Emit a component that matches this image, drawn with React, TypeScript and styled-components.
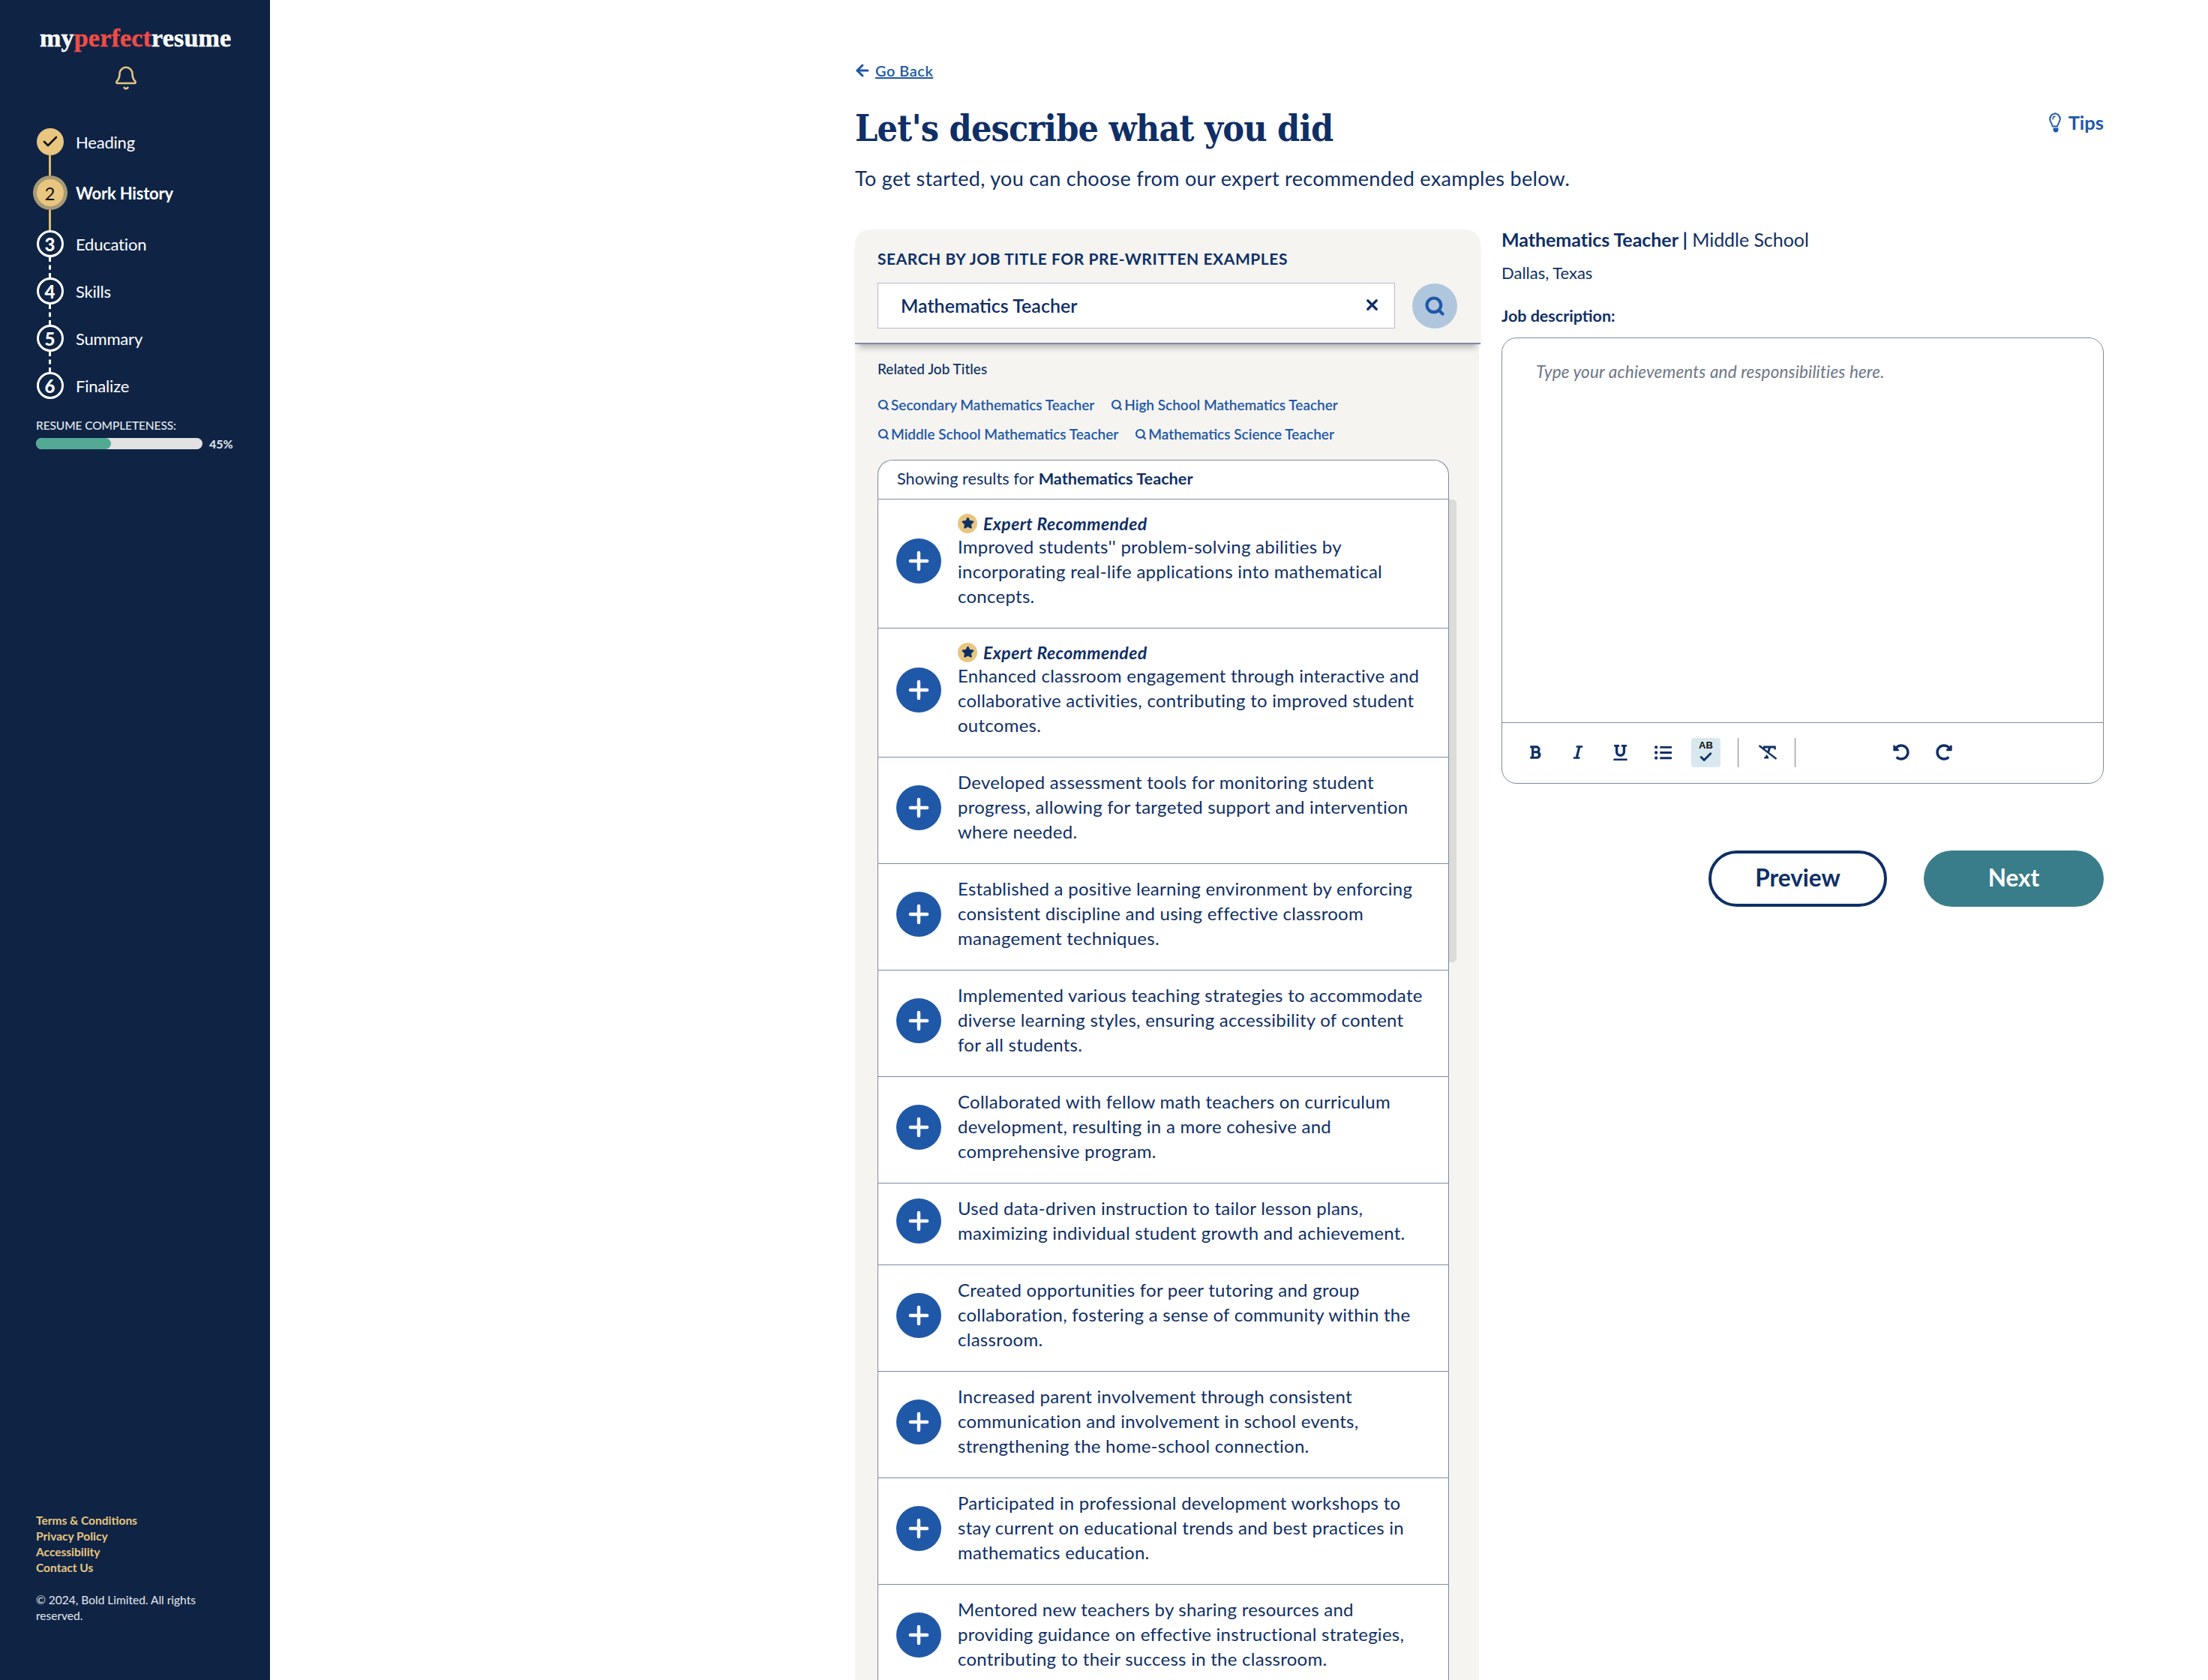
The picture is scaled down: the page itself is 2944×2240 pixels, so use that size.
import React from "react";
import styled, { createGlobalStyle } from "styled-components";
import { ArrowLeft, Bell, Check, Plus, Search, Star, X } from "lucide-react";
import { FaBold, FaItalic, FaListUl, FaRedoAlt, FaRemoveFormat, FaUnderline, FaUndoAlt } from "react-icons/fa";

const navy = "#0f2f66";
const side = "#0f2445";
const gold = "#e8c680";
const blue = "#2058a8";
const line = "#7c8aa3";
const sans = '"Lato", "Noto Sans", sans-serif';

const GlobalStyle = createGlobalStyle`
  html, body {
    margin: 0;
    padding: 0;
    height: 2240px;
    overflow: hidden;
    background: #fff;
    font-family: ${sans};
    color: ${navy};
  }
`;

const Page = styled.div`
  display: flex;
  width: 2944px;
  height: 2240px;
  overflow: hidden;
`;

const Sidebar = styled.aside`
  width: 360px;
  height: 2240px;
  flex: none;
  box-sizing: border-box;
  padding: 33px 0 0 44px;
  background: ${side};
  color: #fff;
  display: flex;
  flex-direction: column;
`;

const Logo = styled.div`
  margin-left: 9px;
  font: 700 34px/36px "Liberation Serif", serif;
  letter-spacing: 0.2px;
  -webkit-text-stroke: 0.5px currentColor;
  color: #fff;
  span {
    color: #ef4c45;
  }
`;

const BellWrap = styled.div`
  margin: 18px 0 0 107px;
  height: 36px;
  color: ${gold};
`;

const Steps = styled.div`
  margin-top: 48px;
  display: flex;
  flex-direction: column;
`;

const StepRow = styled.div`
  display: flex;
  align-items: center;
  gap: 12px;
`;

const StepSlot = styled.div`
  width: 45px;
  display: flex;
  justify-content: center;
`;

const StepDot = styled.div<{ $state: "done" | "current" | "todo" }>`
  width: 36px;
  height: 36px;
  box-sizing: border-box;
  border-radius: 50%;
  display: flex;
  align-items: center;
  justify-content: center;
  font-size: 24px;
  font-weight: ${(p) => (p.$state === "todo" ? 900 : 400)};
  color: ${(p) => (p.$state === "todo" ? "#fff" : "#111")};
  background: ${(p) => (p.$state === "todo" ? "transparent" : gold)};
  border: ${(p) => (p.$state === "todo" ? "3px solid #fff" : "none")};
  box-shadow: ${(p) => (p.$state === "current" ? "0 0 0 5px #a89a74" : "none")};
  margin: ${(p) => (p.$state === "current" ? "5px 0" : "0")};
`;

const StepLabel = styled.div<{ $bold?: boolean }>`
  font-size: 22px;
  font-weight: ${(p) => (p.$bold ? 700 : 400)};
  letter-spacing: -0.2px;
  color: #fff;
`;

const Connector = styled.div<{ $solid?: boolean }>`
  width: 3px;
  height: 27px;
  margin-left: 21px;
  background: ${(p) => (p.$solid ? "#d9b970" : "transparent")};
  border-left: ${(p) => (p.$solid ? "none" : "3px dashed #fff")};
  box-sizing: border-box;
`;

const CompleteLabel = styled.div`
  margin: 25px 0 0 4px;
  font-size: 15.5px;
  line-height: 20px;
  font-weight: 500;
  color: #e6e8ee;
  letter-spacing: -0.1px;
`;

const CompleteRow = styled.div`
  margin: 5px 0 0 4px;
  display: flex;
  align-items: center;
  gap: 9px;
  font-size: 16px;
  font-weight: 700;
  color: #e6e8ee;
`;

const Track = styled.div`
  width: 222px;
  height: 15px;
  border-radius: 8px;
  background: #e2e2e2;
  overflow: hidden;
`;

const Fill = styled.div`
  height: 100%;
  border-radius: 8px;
  background: #53a994;
`;

const SideFooter = styled.div`
  margin: auto 0 75px 4px;
  font-size: 15.5px;
  line-height: 21px;
  width: 240px;
`;

const FooterLink = styled.div`
  color: ${gold};
  font-weight: 700;
`;

const Copyright = styled.div`
  margin-top: 22px;
  color: #e6e8ee;
`;

const Main = styled.main`
  flex: 1;
  box-sizing: border-box;
  padding: 82px 139px 0 780px;
  min-width: 0;
`;

const GoBack = styled.a`
  display: flex;
  align-items: center;
  gap: 5px;
  height: 24px;
  margin-left: -2px;
  font-size: 20px;
  font-weight: 600;
  color: ${blue};
  span {
    text-decoration: underline;
    letter-spacing: 0.5px;
  }
`;

const TitleRow = styled.div`
  margin-top: 30px;
  display: flex;
  align-items: center;
  justify-content: space-between;
`;

const Title = styled.h1`
  margin: 0;
  font: 700 48px/70px "DejaVu Serif Condensed", "DejaVu Serif", serif;
  letter-spacing: -0.8px;
  color: ${navy};
`;

const Tips = styled.div`
  display: flex;
  align-items: center;
  gap: 8px;
  margin-top: -16px;
  font-size: 25.5px;
  font-weight: 700;
  color: ${blue};
`;

const Subtitle = styled.p`
  margin: 14px 0 0;
  font-size: 27px;
  line-height: 36px;
  letter-spacing: 0.3px;
  color: ${navy};
`;

const Columns = styled.div`
  margin-top: 50px;
  display: grid;
  grid-template-columns: 834px 803px;
  column-gap: 28px;
  align-items: start;
`;

const Panel = styled.section`
  background: #f5f4f1;
  border-radius: 20px 20px 0 0;
  height: 1934px;
  width: 832px;
`;

const SearchHead = styled.div`
  box-sizing: border-box;
  height: 153px;
  width: 834px;
  padding: 27px 30px 0;
  border-bottom: 2px solid ${line};
  box-shadow: 0 9px 9px -5px rgba(0, 0, 0, 0.28);
  border-radius: 20px 20px 0 0;
  background: #f5f4f1;
`;

const SearchLabel = styled.div`
  font-size: 21px;
  line-height: 24px;
  font-weight: 700;
  letter-spacing: 0.55px;
  color: ${navy};
  text-transform: uppercase;
`;

const SearchRow = styled.div`
  margin-top: 20px;
  display: flex;
  align-items: center;
  gap: 23px;
`;

const SearchBox = styled.div`
  flex: none;
  width: 690px;
  height: 61px;
  box-sizing: border-box;
  padding: 0 18px 2px 30px;
  display: flex;
  align-items: center;
  justify-content: space-between;
  background: #fff;
  border: 1.5px solid #b6bccd;
  font-size: 25px;
  font-weight: 600;
  color: ${navy};
`;

const SearchButton = styled.div`
  width: 60px;
  height: 60px;
  border-radius: 50%;
  background: #b0c6dc;
  color: ${blue};
  display: flex;
  align-items: center;
  justify-content: center;
`;

const Related = styled.div`
  padding: 21px 0 0 30px;
`;

const RelatedLabel = styled.div`
  font-size: 19px;
  line-height: 24px;
  font-weight: 500;
  color: ${navy};
`;

const LinkRow = styled.div`
  margin-top: 24px;
  height: 24px;
  display: flex;
  gap: 22px;
  & + & {
    margin-top: 15px;
  }
`;

const RelatedLink = styled.a`
  display: flex;
  align-items: center;
  gap: 2px;
  font-size: 19px;
  line-height: 24px;
  font-weight: 600;
  color: ${blue};
  white-space: nowrap;
`;

const ResultsWrap = styled.div`
  display: flex;
  margin: 22px 0 0 30px;
`;

const Card = styled.div`
  width: 762px;
  box-sizing: border-box;
  flex: none;
  background: #fff;
  border: 1.5px solid ${line};
  border-bottom: none;
  border-radius: 20px 20px 0 0;
`;

const CardHead = styled.div`
  height: 52px;
  box-sizing: border-box;
  padding: 0 0 3px 25px;
  display: flex;
  align-items: center;
  gap: 6px;
  font-size: 21.7px;
  border-bottom: 1.5px solid ${line};
  b {
    font-weight: 700;
  }
`;

const Scrollbar = styled.div`
  width: 10px;
  height: 617px;
  margin-top: 53px;
  background: #dcdbd8;
  border-radius: 0 5px 5px 0;
`;

const Item = styled.div`
  box-sizing: border-box;
  padding: 16px 0 26px 24px;
  display: flex;
  align-items: center;
  gap: 23px;
  border-bottom: 1.5px solid ${line};
`;

const AddButton = styled.div`
  width: 60px;
  height: 60px;
  flex: none;
  margin-top: 2px;
  border-radius: 50%;
  background: ${blue};
  color: #fff;
  display: flex;
  align-items: center;
  justify-content: center;
`;

const ItemBody = styled.div`
  margin-left: -1px;
`;

const Expert = styled.div`
  height: 29px;
  margin-top: 1px;
  display: flex;
  align-items: center;
  gap: 8px;
  font-size: 23px;
  font-weight: 700;
  font-style: italic;
  letter-spacing: 0.4px;
  color: ${navy};
`;

const ExpertBadge = styled.div`
  width: 26px;
  height: 26px;
  border-radius: 50%;
  background: ${gold};
  color: ${navy};
  display: flex;
  align-items: center;
  justify-content: center;
`;

const ItemLine = styled.div`
  font-size: 24px;
  line-height: 33px;
  letter-spacing: 0.26px;
  white-space: nowrap;
  color: ${navy};
`;

const Side = styled.section`
  display: flex;
  flex-direction: column;
`;

const JobTitle = styled.div`
  margin-top: -2px;
  font-size: 25px;
  line-height: 30px;
  letter-spacing: -0.05px;
  color: ${navy};
  b {
    font-weight: 700;
  }
`;

const JobPlace = styled.div`
  margin-top: 15px;
  font-size: 22px;
  line-height: 30px;
`;

const JobLabel = styled.div`
  margin-top: 27px;
  font-size: 21.5px;
  line-height: 30px;
  font-weight: 700;
`;

const Editor = styled.div`
  margin-top: 14px;
  height: 595px;
  box-sizing: border-box;
  border: 1.5px solid ${line};
  border-radius: 20px;
  display: flex;
  flex-direction: column;
`;

const EditorBody = styled.div`
  flex: 1;
  padding: 30px 45px 0;
  font-size: 22.5px;
  line-height: 30px;
  letter-spacing: 0.15px;
  font-style: italic;
  color: #6d7686;
`;

const Toolbar = styled.div`
  height: 81px;
  box-sizing: border-box;
  padding: 0 0 2px 15px;
  display: flex;
  align-items: center;
  border-top: 1.5px solid ${line};
`;

const ToolSlot = styled.div<{ $gap?: number }>`
  width: 57px;
  height: 39px;
  flex: none;
  margin-left: ${(p) => p.$gap || 0}px;
  display: flex;
  align-items: center;
  justify-content: center;
  color: ${navy};
`;

const SpellBox = styled.div`
  width: 39px;
  height: 39px;
  border-radius: 4px;
  background: #d8e8ee;
  display: flex;
  flex-direction: column;
  align-items: center;
  justify-content: center;
  font-family: "Liberation Sans", sans-serif;
  font-size: 13px;
  line-height: 13px;
  font-weight: 700;
  color: #111;
  svg {
    color: ${navy};
  }
`;

const ToolDivider = styled.div<{ $gap: number }>`
  width: 1px;
  height: 39px;
  flex: none;
  margin-left: ${(p) => p.$gap}px;
  background: #7c8290;
`;

const Actions = styled.div`
  margin-top: 89px;
  display: flex;
  justify-content: flex-end;
  gap: 49px;
`;

const PillButton = styled.button<{ $primary?: boolean }>`
  width: ${(p) => (p.$primary ? 240 : 238)}px;
  height: 75px;
  box-sizing: border-box;
  padding: 0 0 3px;
  border-radius: 38px;
  font-family: ${sans};
  font-size: 31.5px;
  font-weight: 700;
  background: ${(p) => (p.$primary ? "#3a7d8a" : "#fff")};
  color: ${(p) => (p.$primary ? "#fff" : navy)};
  border: ${(p) => (p.$primary ? "none" : `4px solid ${navy}`)};
`;

const BulbIcon = () => (
  <svg width="18" height="27" viewBox="0 0 18 27" fill="none" stroke="currentColor">
    <path d="M9 1.2C4.4 1.2 1.2 4.8 1.2 8.8c0 3.700 2.600 5.600 3.700 9.700h6.200c1.100-4.100 3.700-6 3.700-9.700 0-4-3.200-7.600-7.800-7.600Z" strokeWidth="2" />
    <path d="M5 9c0-2 1-3.500 3-4" strokeWidth="1.4" strokeLinecap="round" />
    <path d="M5.500 20.500h7v2.200c0 2.200-1.500 3.800-3.500 3.800s-3.500-1.600-3.500-3.800Z" fill="currentColor" stroke="none" />
  </svg>
);

const steps = ["Heading", "Work History", "Education", "Skills", "Summary", "Finalize"];

const related = [
  ["Secondary Mathematics Teacher", "High School Mathematics Teacher"],
  ["Middle School Mathematics Teacher", "Mathematics Science Teacher"],
];

const results = [
  { expert: true, lines: ["Improved students'' problem-solving abilities by", "incorporating real-life applications into mathematical", "concepts."] },
  { expert: true, lines: ["Enhanced classroom engagement through interactive and", "collaborative activities, contributing to improved student", "outcomes."] },
  { lines: ["Developed assessment tools for monitoring student", "progress, allowing for targeted support and intervention", "where needed."] },
  { lines: ["Established a positive learning environment by enforcing", "consistent discipline and using effective classroom", "management techniques."] },
  { lines: ["Implemented various teaching strategies to accommodate", "diverse learning styles, ensuring accessibility of content", "for all students."] },
  { lines: ["Collaborated with fellow math teachers on curriculum", "development, resulting in a more cohesive and", "comprehensive program."] },
  { lines: ["Used data-driven instruction to tailor lesson plans,", "maximizing individual student growth and achievement."] },
  { lines: ["Created opportunities for peer tutoring and group", "collaboration, fostering a sense of community within the", "classroom."] },
  { lines: ["Increased parent involvement through consistent", "communication and involvement in school events,", "strengthening the home-school connection."] },
  { lines: ["Participated in professional development workshops to", "stay current on educational trends and best practices in", "mathematics education."] },
  { lines: ["Mentored new teachers by sharing resources and", "providing guidance on effective instructional strategies,", "contributing to their success in the classroom."] },
];

export default function App() {
  return (
    <Page>
      <GlobalStyle />
      <Sidebar>
        <Logo>
          my<span>perfect</span>resume
        </Logo>
        <BellWrap>
          <Bell size={34} strokeWidth={1.8} />
        </BellWrap>
        <Steps>
          {steps.map((name, i) => {
            const state = i === 0 ? "done" : i === 1 ? "current" : "todo";
            return (
              <React.Fragment key={name}>
                <StepRow>
                  <StepSlot>
                    <StepDot $state={state}>
                      {i === 0 ? <Check size={24} strokeWidth={2.6} /> : i + 1}
                    </StepDot>
                  </StepSlot>
                  <StepLabel $bold={i === 1}>{name}</StepLabel>
                </StepRow>
                {i < 5 && <Connector $solid={i < 2} />}
              </React.Fragment>
            );
          })}
        </Steps>
        <CompleteLabel>RESUME COMPLETENESS:</CompleteLabel>
        <CompleteRow>
          <Track>
            <Fill style={{ width: "45%" }} />
          </Track>
          45%
        </CompleteRow>
        <SideFooter>
          <FooterLink>Terms &amp; Conditions</FooterLink>
          <FooterLink>Privacy Policy</FooterLink>
          <FooterLink>Accessibility</FooterLink>
          <FooterLink>Contact Us</FooterLink>
          <Copyright>© 2024, Bold Limited. All rights reserved.</Copyright>
        </SideFooter>
      </Sidebar>
      <Main>
        <GoBack>
          <ArrowLeft size={24} strokeWidth={3} />
          <span>Go Back</span>
        </GoBack>
        <TitleRow>
          <Title>Let's describe what you did</Title>
          <Tips>
            <BulbIcon />
            Tips
          </Tips>
        </TitleRow>
        <Subtitle>To get started, you can choose from our expert recommended examples below.</Subtitle>
        <Columns>
          <Panel>
            <SearchHead>
              <SearchLabel>Search by job title for pre-written examples</SearchLabel>
              <SearchRow>
                <SearchBox>
                  Mathematics Teacher
                  <X size={23} strokeWidth={3.4} />
                </SearchBox>
                <SearchButton>
                  <Search size={28} strokeWidth={3.6} />
                </SearchButton>
              </SearchRow>
            </SearchHead>
            <Related>
              <RelatedLabel>Related Job Titles</RelatedLabel>
              {related.map((row) => (
                <LinkRow key={row[0]}>
                  {row.map((title) => (
                    <RelatedLink key={title}>
                      <Search size={16} strokeWidth={3.2} />
                      {title}
                    </RelatedLink>
                  ))}
                </LinkRow>
              ))}
            </Related>
            <ResultsWrap>
              <Card>
                <CardHead>
                  Showing results for <b>Mathematics Teacher</b>
                </CardHead>
                {results.map((item) => (
                  <Item key={item.lines[0]}>
                    <AddButton>
                      <Plus size={38} strokeWidth={2.8} />
                    </AddButton>
                    <ItemBody>
                      {item.expert && (
                        <Expert>
                          <ExpertBadge>
                            <Star size={17} fill="currentColor" strokeWidth={2} />
                          </ExpertBadge>
                          Expert Recommended
                        </Expert>
                      )}
                      {item.lines.map((text) => (
                        <ItemLine key={text}>{text}</ItemLine>
                      ))}
                    </ItemBody>
                  </Item>
                ))}
              </Card>
              <Scrollbar />
            </ResultsWrap>
          </Panel>
          <Side>
            <JobTitle>
              <b>Mathematics Teacher |</b> Middle School
            </JobTitle>
            <JobPlace>Dallas, Texas</JobPlace>
            <JobLabel>Job description:</JobLabel>
            <Editor>
              <EditorBody>Type your achievements and responsibilities here.</EditorBody>
              <Toolbar>
                <ToolSlot><FaBold size={20} /></ToolSlot>
                <ToolSlot><FaItalic size={20} /></ToolSlot>
                <ToolSlot><FaUnderline size={21} /></ToolSlot>
                <ToolSlot><FaListUl size={23} /></ToolSlot>
                <ToolSlot>
                  <SpellBox>
                    AB
                    <Check size={19} strokeWidth={3.6} />
                  </SpellBox>
                </ToolSlot>
                <ToolDivider $gap={14} />
                <ToolSlot $gap={10}><FaRemoveFormat size={24} /></ToolSlot>
                <ToolDivider $gap={8} />
                <ToolSlot $gap={112}><FaUndoAlt size={22} /></ToolSlot>
                <ToolSlot><FaRedoAlt size={22} /></ToolSlot>
              </Toolbar>
            </Editor>
            <Actions>
              <PillButton>Preview</PillButton>
              <PillButton $primary>Next</PillButton>
            </Actions>
          </Side>
        </Columns>
      </Main>
    </Page>
  );
}
